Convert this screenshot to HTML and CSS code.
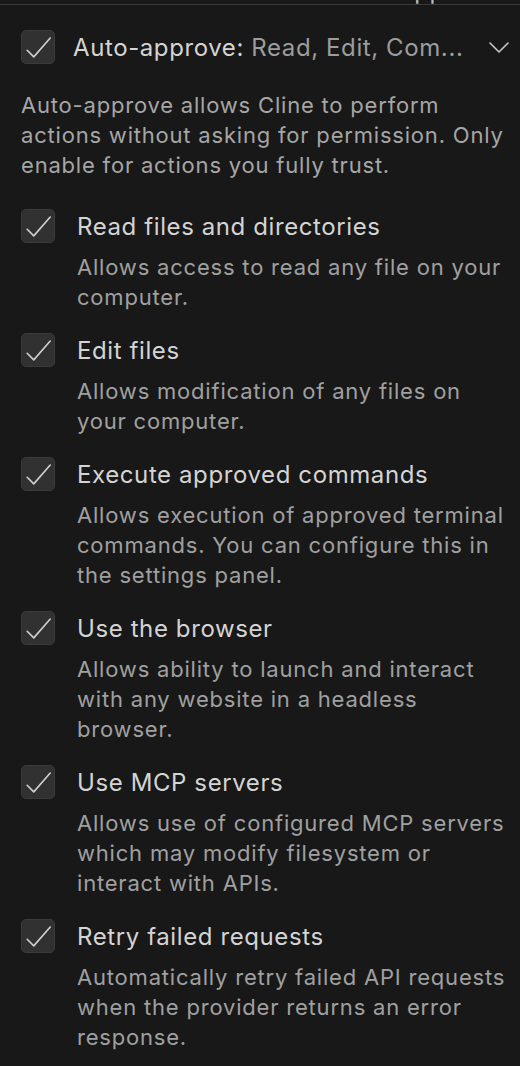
FILE: index.html
```html
<!DOCTYPE html>
<html>
<head>
<meta charset="utf-8">
<link rel="stylesheet" href="styles.css">
</head>
<body>
<div class="page">
  <div class="clip"><div class="clip-text">files and commands that need approval</div></div>
  <div class="panel">
    <div class="header">
      <span class="cb"><svg viewBox="0 0 34 34" width="34" height="34"><path d="M5.5 20.5 L12.5 27.5 L30 7.5" fill="none" stroke="#d0d0d0" stroke-width="1.7" stroke-linecap="round" stroke-linejoin="round"/></svg></span>
      <span class="header-text"><span class="strong">Auto-approve:</span> <span class="muted">Read, Edit, Com...</span></span>
      <svg class="chev" viewBox="0 0 20 11" width="20" height="11"><path d="M1 1 L10 10 L19 1" fill="none" stroke="#c8c8c8" stroke-width="1.6" stroke-linecap="round" stroke-linejoin="round"/></svg>
    </div>
    <p class="intro">Auto-approve allows Cline to perform actions without asking for permission. Only enable for actions you fully trust.</p>
    <div class="items">
      <div class="item">
        <div class="row"><span class="cb"><svg viewBox="0 0 34 34" width="34" height="34"><path d="M5.5 20.5 L12.5 27.5 L30 7.5" fill="none" stroke="#d0d0d0" stroke-width="1.7" stroke-linecap="round" stroke-linejoin="round"/></svg></span><span class="title">Read files and directories</span></div>
        <p class="desc">Allows access to read any file on your computer.</p>
      </div>
      <div class="item">
        <div class="row"><span class="cb"><svg viewBox="0 0 34 34" width="34" height="34"><path d="M5.5 20.5 L12.5 27.5 L30 7.5" fill="none" stroke="#d0d0d0" stroke-width="1.7" stroke-linecap="round" stroke-linejoin="round"/></svg></span><span class="title">Edit files</span></div>
        <p class="desc">Allows modification of any files on your computer.</p>
      </div>
      <div class="item">
        <div class="row"><span class="cb"><svg viewBox="0 0 34 34" width="34" height="34"><path d="M5.5 20.5 L12.5 27.5 L30 7.5" fill="none" stroke="#d0d0d0" stroke-width="1.7" stroke-linecap="round" stroke-linejoin="round"/></svg></span><span class="title">Execute approved commands</span></div>
        <p class="desc">Allows execution of approved terminal commands. You can configure this in the settings panel.</p>
      </div>
      <div class="item">
        <div class="row"><span class="cb"><svg viewBox="0 0 34 34" width="34" height="34"><path d="M5.5 20.5 L12.5 27.5 L30 7.5" fill="none" stroke="#d0d0d0" stroke-width="1.7" stroke-linecap="round" stroke-linejoin="round"/></svg></span><span class="title">Use the browser</span></div>
        <p class="desc">Allows ability to launch and interact with any website in a headless browser.</p>
      </div>
      <div class="item">
        <div class="row"><span class="cb"><svg viewBox="0 0 34 34" width="34" height="34"><path d="M5.5 20.5 L12.5 27.5 L30 7.5" fill="none" stroke="#d0d0d0" stroke-width="1.7" stroke-linecap="round" stroke-linejoin="round"/></svg></span><span class="title">Use MCP servers</span></div>
        <p class="desc">Allows use of configured MCP servers which may modify filesystem or interact with APIs.</p>
      </div>
      <div class="item">
        <div class="row"><span class="cb"><svg viewBox="0 0 34 34" width="34" height="34"><path d="M5.5 20.5 L12.5 27.5 L30 7.5" fill="none" stroke="#d0d0d0" stroke-width="1.7" stroke-linecap="round" stroke-linejoin="round"/></svg></span><span class="title">Retry failed requests</span></div>
        <p class="desc">Automatically retry failed API requests when the provider returns an error response.</p>
      </div>
    </div>
  </div>
</div>
</body>
</html>
```
FILE: styles.css
```css
html, body {
  margin: 0;
  padding: 0;
  background: #181818;
}
.page {
  width: 520px;
  height: 1066px;
  overflow: hidden;
  font-family: Inter, "Noto Sans", sans-serif;
  font-size: 24px;
  letter-spacing: 0.6px;
  color: #cccccc;
}
.clip {
  height: 4px;
  overflow: hidden;
  border-bottom: 1px solid #3a3a3a;
  padding-left: 34px;
}
.clip-text {
  margin-top: -21px;
  line-height: 24px;
  color: #bdbdbd;
  white-space: nowrap;
}
.panel {
  padding: 24px 0 0 21px;
}
.header {
  display: flex;
  align-items: center;
  height: 36px;
}
.cb {
  flex: none;
  width: 32px;
  height: 32px;
  border: 1px solid #3b3b3b;
  border-radius: 5px;
  background: #313131;
  display: flex;
  align-items: center;
  justify-content: center;
}
.cb svg {
  display: block;
}
.header-text {
  margin-left: 18px;
  white-space: nowrap;
}
.strong {
  color: #d4d4d4;
}
.muted {
  color: #9d9d9d;
}
.chev {
  margin-left: auto;
  margin-right: 11px;
}
.intro {
  margin: 25px 8px 0 0;
  font-size: 22px;
  letter-spacing: 0.8px;
  line-height: 30px;
  color: #a6a6a6;
}
.items {
  display: flex;
  flex-direction: column;
  gap: 21px;
  margin-top: 29px;
}
.row {
  display: flex;
  align-items: center;
  height: 34px;
}
.title {
  margin-left: 22px;
  color: #d4d4d4;
}
.desc {
  margin: 9px 6px 0 56px;
  font-size: 22px;
  letter-spacing: 0.8px;
  line-height: 30px;
  color: #a0a0a0;
}
```
